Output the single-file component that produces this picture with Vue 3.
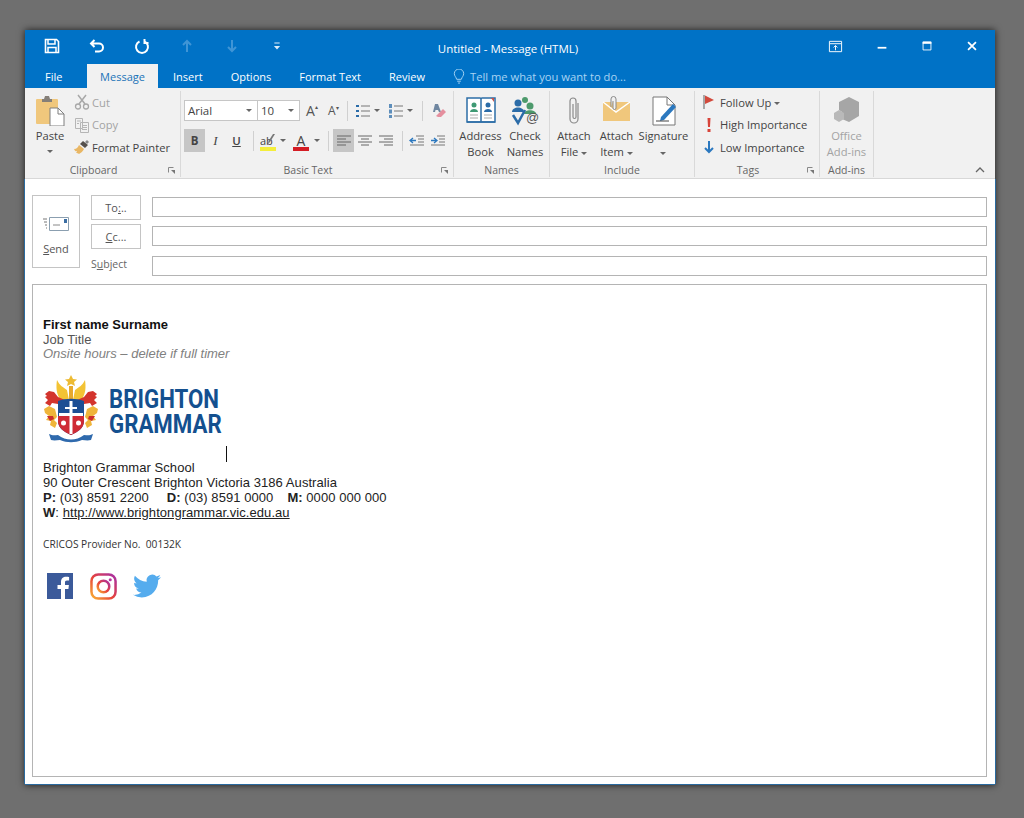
<script setup>
const tabs = ['Insert', 'Options', 'Format Text', 'Review']
</script>

<template>
  <div class="page">
    <div class="window">
      <header class="titlebar">
        <div class="qat">
          <svg class="qat-icon" viewBox="0 0 16 16"><path d="M1.5 1.500h11l2 2v11h-13z" fill="none" stroke="#fff" stroke-width="1.6"/><path d="M4 2v4h7V2M4 14V9.500h8V14" fill="none" stroke="#fff" stroke-width="1.5"/></svg>
          <svg class="qat-icon" viewBox="0 0 16 16"><path d="M2 5.500h8a4 4 0 0 1 0 8H6M5.500 2 2 5.500 5.500 9" fill="none" stroke="#fff" stroke-width="2"/></svg>
          <svg class="qat-icon" viewBox="0 0 16 16"><path d="M5.500 3.500a6 6 0 1 0 5 0M10.500 1v4h4" fill="none" stroke="#fff" stroke-width="2"/></svg>
          <svg class="qat-icon" viewBox="0 0 16 16"><path d="M8 14V3M4 7l4-4 4 4" fill="none" stroke="#3f95d6" stroke-width="2"/></svg>
          <svg class="qat-icon" viewBox="0 0 16 16"><path d="M8 2v11M4 9l4 4 4-4" fill="none" stroke="#3f95d6" stroke-width="2"/></svg>
          <svg class="qat-icon qat-more" viewBox="0 0 16 16"><path d="M5 4h6v1H5zM4.500 8h7L8 12z" fill="#dcecf8"/></svg>
        </div>
        <div class="doc-title">Untitled - Message (HTML)</div>
        <div class="win-controls">
          <svg class="win-icon win-first" viewBox="0 0 16 16"><path d="M1.500 2.500h13v11h-13zM2 5h12" fill="none" stroke="#fff"/><path d="M8 12V7M6 9l2-2 2 2" fill="none" stroke="#fff"/></svg>
          <svg class="win-icon" viewBox="0 0 16 16"><path d="M3 9h10v2H3z" fill="#fff"/></svg>
          <svg class="win-icon" viewBox="0 0 16 16"><path d="M3.500 3.500h9v9h-9z" fill="none" stroke="#fff"/><path d="M3 3h10v2.500H3z" fill="#fff"/></svg>
          <svg class="win-icon" viewBox="0 0 16 16"><path d="m3.500 3.500 9 9m0-9-9 9" fill="none" stroke="#fff" stroke-width="2"/></svg>
        </div>
      </header>

      <nav class="tabbar">
        <span class="tab tab-file">File</span>
        <span class="tab tab-active">Message</span>
        <span v-for="tab in tabs" :key="tab" class="tab">{{ tab }}</span>
        <span class="tell-me">
          <svg viewBox="0 0 12 16"><path d="M3.500 11C3 8.500 1 7.500 1 5a5 5 0 0 1 10 0c0 2.500-2 3.500-2.500 6zM4 13h4M5 15h2" fill="none" stroke="#a9d4f3"/></svg>
          Tell me what you want to do...
        </span>
      </nav>

      <section class="ribbon">
        <!-- Clipboard -->
        <div class="group group-clipboard">
          <div class="group-body clipboard">
            <div class="big-btn paste">
              <svg class="big-icon" viewBox="0 0 30 30">
                <rect x="1" y="3" width="22" height="25" rx="1" fill="#f0c77c"/>
                <path d="M7 3h2l1-3h4l1 3h2v3H7z" fill="#857f78"/>
                <path d="M15 12h8l6 6v12H15z" fill="#fff" stroke="#7f7f7f"/>
                <path d="M23 12v6h6" fill="none" stroke="#7f7f7f"/>
              </svg>
              <span class="big-label">Paste</span>
              <span class="caret caret-low"></span>
            </div>
            <div class="small-list">
              <div class="small-item disabled">
                <svg viewBox="0 0 16 16"><circle cx="4" cy="12.500" r="2.500" fill="none" stroke="#a8a8a8" stroke-width="1.300"/><circle cx="12" cy="12.500" r="2.500" fill="none" stroke="#a8a8a8" stroke-width="1.300"/><path d="M5 10 12 1M11 10 4 1" stroke="#a8a8a8" stroke-width="1.500"/></svg>
                <span>Cut</span>
              </div>
              <div class="small-item disabled">
                <svg viewBox="0 0 16 16"><path d="M1.500 1.500h7v10h-7zM6.500 5.500h8v10h-8zM3 4h4M3 6.500h2M8 8.500h5M8 10.500h5M8 12.500h5" fill="#f1f1f1" stroke="#b5b5b5"/></svg>
                <span>Copy</span>
              </div>
              <div class="small-item">
                <svg viewBox="0 0 16 16"><path d="M0 10c3 0 4-2 5-4l5 4c-1 2-3 4-5 5-1-1-2-1-3-1 1-1 1-2 1-2-1 .5-2 .5-3-2z" fill="#e9b765"/><path d="m6 5 3-3 5 4-3 3z" fill="#55504c"/><path d="m11 3 2-2 2 2-2 2z" fill="#888"/></svg>
                <span>Format Painter</span>
              </div>
            </div>
          </div>
          <div class="group-label has-launcher">Clipboard<svg class="launcher" viewBox="0 0 8 8"><path d="M.5.500h5M.5.500v5" stroke="#888" fill="none"/><path d="M3 3h4v4z" fill="#777"/></svg></div>
        </div>

        <!-- Basic Text -->
        <div class="group group-basic">
          <div class="group-body basic">
            <div class="tool-row row-font">
              <div class="combo combo-font"><span>Arial</span><i class="caret"></i></div>
              <div class="combo combo-size"><span>10</span><i class="caret"></i></div>
              <span class="grow-a">A<sup>▴</sup></span>
              <span class="shrink-a">A<sup>▾</sup></span>
              <i class="vsep sep-list"></i>
              <svg class="tool-svg" viewBox="0 0 16 16"><path d="M1 2h3v2H1zM1 7h3v2H1zM1 12h3v2H1z" fill="#2b6ca8"/><path d="M6 3h9M6 8h9M6 13h9" stroke="#777"/></svg>
              <i class="caret list-caret"></i>
              <svg class="tool-svg" viewBox="0 0 16 16"><path d="M1 1h3v4H1zM1 6.500h3v4H1zM1 12h3v3H1z" fill="#2b6ca8" opacity=".75"/><path d="M6 3h9M6 8h9M6 13h9" stroke="#777"/></svg>
              <i class="caret list-caret"></i>
              <i class="vsep sep-clear"></i>
              <svg class="tool-svg" viewBox="0 0 16 16"><path d="M4 1h3l3 8H8L7 7H4.500L4 9H2z" fill="#6f86a0"/><path d="m5 13 7-7 3 3-5 5H7z" fill="#e58f9e"/></svg>
            </div>
            <div class="tool-row row-format">
              <span class="fmt fmt-on fmt-b">B</span>
              <span class="fmt fmt-i">I</span>
              <span class="fmt fmt-u">U</span>
              <i class="vsep sep-color"></i>
              <span class="color-tool">
                <span class="color-letter">ab</span>
                <svg class="color-pen" viewBox="0 0 8 10"><path d="M7 0 2 8 0 10l.5-3L5 0z" fill="#777"/></svg>
                <i class="color-bar highlight"></i>
              </span>
              <i class="caret hl-caret"></i>
              <span class="color-tool font-color">
                <span class="color-a">A</span>
                <i class="color-bar red"></i>
              </span>
              <i class="caret"></i>
              <i class="vsep sep-align"></i>
              <span class="fmt fmt-on"><svg viewBox="0 0 16 16"><path d="M1 3h14M1 6h9M1 9h14M1 12h9" stroke="#666"/></svg></span>
              <span class="fmt"><svg viewBox="0 0 16 16"><path d="M1 3h14M4 6h8M1 9h14M4 12h8" stroke="#666"/></svg></span>
              <span class="fmt"><svg viewBox="0 0 16 16"><path d="M1 3h14M6 6h9M1 9h14M6 12h9" stroke="#666"/></svg></span>
              <i class="vsep sep-indent"></i>
              <span class="fmt"><svg viewBox="0 0 16 16"><path d="M7 3h8M9 6h6M9 9h6M1 12h14" stroke="#777"/><path d="M7 7.500H1M4 5 1 7.500 4 10" fill="none" stroke="#2b78bf" stroke-width="1.300"/></svg></span>
              <span class="fmt"><svg viewBox="0 0 16 16"><path d="M7 3h8M9 6h6M9 9h6M1 12h14" stroke="#777"/><path d="M1 7.500h6M4 5l3 2.500L4 10" fill="none" stroke="#2b78bf" stroke-width="1.300"/></svg></span>
            </div>
          </div>
          <div class="group-label has-launcher">Basic Text<svg class="launcher" viewBox="0 0 8 8"><path d="M.5.500h5M.5.500v5" stroke="#888" fill="none"/><path d="M3 3h4v4z" fill="#777"/></svg></div>
        </div>

        <!-- Names -->
        <div class="group group-names">
          <div class="group-body big-row">
            <div class="big-btn address">
              <svg class="big-icon" viewBox="0 0 30 30">
                <path d="M1 2h13c.5 0 1 .5 1 1 0-.5.500-1 1-1h13v24H1z" fill="#fff" stroke="#2c6ea6" stroke-width="1.500"/>
                <path d="M15 3v23M1 26h28" stroke="#2c6ea6" stroke-width="1.500"/>
                <circle cx="8" cy="9" r="2.500" fill="#3f9a74"/><path d="M4 16c0-4 8-4 8 0z" fill="#3f9a74"/>
                <circle cx="22" cy="9" r="2.500" fill="#2b6ca8"/><path d="M18 16c0-4 8-4 8 0z" fill="#2b6ca8"/>
                <path d="M4 19h8M4 22h8M18 19h8M18 22h8" stroke="#aaa"/>
                <path d="M25 2h3v4z" fill="#c6504a"/>
              </svg>
              <span class="big-label">Address<br>Book</span>
            </div>
            <div class="big-btn check">
              <svg class="big-icon" viewBox="0 0 30 30">
                <circle cx="8" cy="7" r="3.500" fill="#2b6ca8"/><path d="M2 16c0-6 12-6 12 0z" fill="#2b6ca8"/>
                <circle cx="15" cy="4" r="3" fill="#4d9a6c"/><circle cx="20" cy="10" r="3.500" fill="#4d9a6c"/><path d="M14 18c0-5 12-5 12 0z" fill="#4d9a6c"/>
                <path d="m3 19 5 8L15 14" fill="none" stroke="#2b6ca8" stroke-width="2.500"/>
                <text x="16" y="26" font-size="13" fill="#555" font-family="Liberation Sans, sans-serif">@</text>
              </svg>
              <span class="big-label">Check<br>Names</span>
            </div>
          </div>
          <div class="group-label">Names</div>
        </div>

        <!-- Include -->
        <div class="group group-include">
          <div class="group-body big-row">
            <div class="big-btn attach-file">
              <svg class="big-icon" viewBox="0 0 30 30"><path d="M19 7v16a4 4 0 0 1-8 0V5a3 3 0 0 1 6 0v16a1.500 1.500 0 0 1-3 0V8" fill="none" stroke="#8a8a8a" stroke-width="1.200"/></svg>
              <span class="big-label">Attach<br>File <i class="caret caret-inline"></i></span>
            </div>
            <div class="big-btn attach-item">
              <svg class="big-icon" viewBox="0 0 30 30"><path d="M1 6h27v19H1z" fill="#f0c77c"/><path d="m1 6 13 10L28 6" fill="none" stroke="#fff" stroke-width="1.500"/><path d="M9 11V3a2.500 2.500 0 0 1 5 0v9a1.500 1.500 0 0 1-3 0V5" fill="#f1f1f1" stroke="#8a8a8a"/></svg>
              <span class="big-label">Attach<br>Item <i class="caret caret-inline"></i></span>
            </div>
            <div class="big-btn signature">
              <svg class="big-icon" viewBox="0 0 30 30"><path d="M4 1h14l8 8v20H4z" fill="#fff" stroke="#777"/><path d="M18 1v8h8" fill="none" stroke="#777"/><path d="m12 21 12-13 3 3-12 13-4 1z" fill="#2b78bf"/><path d="M7 25h13" stroke="#444"/></svg>
              <span class="big-label">Signature<br><i class="caret caret-inline"></i></span>
            </div>
          </div>
          <div class="group-label">Include</div>
        </div>

        <!-- Tags -->
        <div class="group group-tags">
          <div class="group-body tag-list">
            <div class="tag-item">
              <svg viewBox="0 0 12 16"><path d="M1 1v14" stroke="#777" stroke-width="1.200"/><path d="M2 1.500 11 6 2 10z" fill="#d2493c"/></svg>
              <span>Follow Up <i class="caret caret-inline"></i></span>
            </div>
            <div class="tag-item">
              <svg viewBox="0 0 12 16"><path d="M4.500 1h3L7 10H5zM4.500 12h3v3h-3z" fill="#d8443a"/></svg>
              <span>High Importance</span>
            </div>
            <div class="tag-item">
              <svg viewBox="0 0 12 16"><path d="M6 2v11M2 9l4 4 4-4" fill="none" stroke="#2b78bf" stroke-width="2"/></svg>
              <span>Low Importance</span>
            </div>
          </div>
          <div class="group-label has-launcher">Tags<svg class="launcher" viewBox="0 0 8 8"><path d="M.5.500h5M.5.500v5" stroke="#888" fill="none"/><path d="M3 3h4v4z" fill="#777"/></svg></div>
        </div>

        <!-- Add-ins -->
        <div class="group group-addins">
          <div class="group-body big-row">
            <div class="big-btn addin disabled">
              <svg class="big-icon" viewBox="0 0 30 30"><path d="m17 1 10 5v14l-10 6-7-3v-7l-3-2V6z" fill="#a6a6a6"/><path d="m7 14 5 3v6l-5 3-5-3v-6z" fill="#b9b9b9"/></svg>
              <span class="big-label">Office<br>Add-ins</span>
            </div>
          </div>
          <div class="group-label">Add-ins</div>
        </div>

        <svg class="collapse" viewBox="0 0 10 6"><path d="m1 5 4-4 4 4" fill="none" stroke="#666" stroke-width="1.300"/></svg>
      </section>

      <section class="compose">
        <div class="headers">
          <button type="button" class="send">
            <svg viewBox="0 0 26 16"><path d="M0 3h4M1 6h3M2 9h2M3 12h1" stroke="#777"/><path d="M6.500 1.500h19v13h-19z" fill="#fff" stroke="#8b9fb0"/><path d="M10 9h7" stroke="#888"/><path d="M21 3h3v4h-3z" fill="#3b6ea3"/></svg>
            <span><u>S</u>end</span>
          </button>
          <div class="fields">
            <div class="field-row">
              <button type="button" class="addr-btn">To<u>:</u>..</button>
              <div class="input"></div>
            </div>
            <div class="field-row">
              <button type="button" class="addr-btn"><u>C</u>c...</button>
              <div class="input"></div>
            </div>
            <div class="field-row">
              <span class="subject">S<u>u</u>bject</span>
              <div class="input input-subject"></div>
            </div>
          </div>
        </div>

        <div class="body">
          <div class="sig-name">First name Surname</div>
          <div class="sig-job">Job Title</div>
          <div class="sig-hours">Onsite hours – delete if full timer</div>

          <div class="logo">
            <svg class="crest" viewBox="0 0 56 68">
              <path d="m28 0 2 4 4 .5-3 2.500 1 4-4-2-4 2 1-4-3-2.500 4-.5z" fill="#edbb33"/>
              <path d="M14 5c3 6 6 7 10 10l2 10H18C13 20 13 11 14 5zM42 5c-3 6-6 7-10 10l-2 10h8c5-5 5-14 4-20z" fill="#f3c334"/>
              <path d="M26 11h4v14h-4z" fill="#e7a92c"/>
              <path d="m2 19 4-3 5 1 4 5 7 3-7 4-6-1-2 3-5-3 3-3-3-3 2-1zM54 19l-4-3-5 1-4 5-7 3 7 4 6-1 2 3 5-3-3-3 3-3-2-1z" fill="#d3342d"/>
              <path d="m1 34 5-3 6 3 2 8-3 3 3 3-2 5-5-3 1-4-5-1 3-4-4-3zM55 34l-5-3-6 3-2 8 3 3-3 3 2 5 5-3-1-4 5-1-3-4 4-3z" fill="#efb53a"/>
              <path d="M4 41h6l1 3-4 2zM52 41h-6l-1 3 4 2z" fill="#cd2f2c"/>
              <path d="M15 26c8-3 18-3 26 0v20c0 7-6 11-13 14-7-3-13-7-13-14z" fill="#1d4f94"/>
              <path d="M15 41h26v5c0 7-6 11-13 14-7-3-13-7-13-14z" fill="#cf2b35"/>
              <path d="M26.500 26h3v33h-3zM16 38h24v3H16zM22 32h12v2H22z" fill="#fff"/>
              <circle cx="20.500" cy="48" r="2.500" fill="#fff"/><circle cx="35.500" cy="48" r="2.500" fill="#fff"/>
              <path d="M6 59c4 2 6 1 9 1 8 6 18 6 26 0 3 0 5 1 9-1l-2 6c-4 1-6 0-9 0-7 3-15 3-22 0-3 0-5 1-9 0z" fill="#2f6aad"/>
            </svg>
            <div class="wordmark"><div>BRIGHTON</div><div>GRAMMAR</div></div>
          </div>

          <i class="text-caret"></i>

          <div class="sig-lines">
            <div>Brighton Grammar School</div>
            <div>90 Outer Crescent Brighton Victoria 3186 Australia</div>
            <div class="phones">
              <span><b>P:</b> (03) 8591 2200</span>
              <span><b>D:</b> (03) 8591 0000</span>
              <span><b>M:</b> 0000 000 000</span>
            </div>
            <div><b>W</b>: <a href="#">http://www.brightongrammar.vic.edu.au</a></div>
          </div>

          <div class="cricos">CRICOS Provider No.&nbsp; 00132K</div>

          <div class="social">
            <svg class="fb" viewBox="0 0 26 26"><rect width="26" height="26" fill="#3b5a9a"/><path d="M18 26V16h3.400l.5-4H18V9.500c0-1.200.4-2 2-2h2.100V4c-.4 0-1.600-.2-3-.2-3 0-5.100 1.900-5.100 5.200v3h-3.500v4H14v10z" fill="#fff"/></svg>
            <svg class="ig" viewBox="0 0 28 28">
              <defs>
                <linearGradient id="ig-grad" x1="0" y1="1" x2="1" y2="0">
                  <stop offset="0" stop-color="#f9b233"/>
                  <stop offset=".45" stop-color="#e8443a"/>
                  <stop offset="1" stop-color="#a62fa8"/>
                </linearGradient>
              </defs>
              <rect x="1.500" y="1.500" width="25" height="25" rx="7" fill="none" stroke="url(#ig-grad)" stroke-width="2.600"/>
              <circle cx="14" cy="14" r="6" fill="none" stroke="url(#ig-grad)" stroke-width="2.600"/>
              <circle cx="21" cy="7" r="1.600" fill="#b936a0"/>
            </svg>
            <svg class="tw" viewBox="0 0 24 24"><path d="M23.953 4.570a10 10 0 0 1-2.825.775 4.958 4.958 0 0 0 2.163-2.723c-.951.555-2.005.959-3.127 1.184a4.920 4.920 0 0 0-8.384 4.482C7.690 8.095 4.067 6.130 1.640 3.162a4.822 4.822 0 0 0-.666 2.475c0 1.710.870 3.213 2.188 4.096a4.904 4.904 0 0 1-2.228-.616v.060a4.923 4.923 0 0 0 3.946 4.827 4.996 4.996 0 0 1-2.212.085 4.936 4.936 0 0 0 4.604 3.417 9.867 9.867 0 0 1-6.102 2.105c-.390 0-.779-.023-1.170-.067a13.995 13.995 0 0 0 7.557 2.209c9.053 0 13.998-7.496 13.998-13.985 0-.210 0-.420-.015-.630A9.935 9.935 0 0 0 24 4.590z" fill="#55acee"/></svg>
          </div>
        </div>
      </section>
    </div>
  </div>
</template>

<style>
html, body {
  margin: 0;
  background: #6f6f6f;
}
</style>

<style scoped>
.page {
  box-sizing: border-box;
  width: 1024px;
  height: 818px;
  padding: 30px 29px 33px 25px;
  background: #6f6f6f;
  font-family: "Open Sans", "Noto Sans", sans-serif;
  overflow: hidden;
}

.window {
  height: 100%;
  display: flex;
  flex-direction: column;
  background: #fff;
  box-shadow: 0 0 7px rgba(0, 0, 0, 0.75);
  border-bottom: 1px solid #2a6a9f;
  box-sizing: border-box;
}

.titlebar {
  height: 34px;
  flex: none;
  display: flex;
  align-items: center;
  box-sizing: border-box;
  padding-bottom: 2px;
  background: #0072c6;
  color: #fff;
}

.qat {
  width: 327px;
  display: flex;
  align-items: center;
  gap: 29px;
  padding-left: 19px;
  box-sizing: border-box;
}

.qat-icon {
  width: 16px;
  height: 16px;
  flex: none;
}

.qat-more {
  width: 14px;
  height: 14px;
  margin-left: 1px;
}

.doc-title {
  width: 307px;
  padding: 5px 0 0 5px;
  box-sizing: border-box;
  text-align: center;
  font-size: 11.5px;
}

.win-controls {
  margin-left: auto;
  display: flex;
  align-items: center;
  gap: 31px;
  padding-right: 16px;
}

.win-icon {
  width: 14px;
  height: 14px;
}

.win-first {
  width: 15px;
  height: 15px;
  margin-right: 1px;
}

.tabbar {
  height: 24px;
  flex: none;
  display: flex;
  align-items: stretch;
  background: #0072c6;
  color: #fff;
  font-size: 11px;
}

.tab {
  display: flex;
  align-items: center;
  padding: 0 14px;
}

.tab-file {
  width: 62px;
  box-sizing: border-box;
  padding-left: 20px;
}

.tab-active {
  width: 71px;
  box-sizing: border-box;
  justify-content: center;
  padding: 0;
  background: #f1f1f1;
  color: #1a73b8;
}

.tab-active + .tab {
  padding-left: 15px;
}

.tell-me {
  display: flex;
  align-items: center;
  gap: 5px;
  margin-left: 14px;
  font-size: 11.2px;
  color: #a9d4f3;
}

.tell-me svg {
  width: 12px;
  height: 15px;
}

.ribbon {
  height: 91px;
  flex: none;
  display: flex;
  position: relative;
  background: #f1f1f1;
  border-bottom: 1px solid #d8d8d8;
  box-sizing: border-box;
  color: #444;
  font-size: 11.2px;
}

.group {
  flex: none;
  display: flex;
  flex-direction: column;
  border-right: 1px solid #d9d9d9;
  margin: 3px 0 1px;
  box-sizing: border-box;
  position: relative;
}

.group-clipboard { width: 156px; }
.group-basic { width: 273px; }
.group-names { width: 96px; }
.group-include { width: 145px; }
.group-tags { width: 125px; }
.group-addins { width: 54px; }

.group-body {
  flex: 1;
  min-height: 0;
}

.group-label {
  height: 14px;
  display: flex;
  align-items: center;
  justify-content: center;
  color: #666;
  font-size: 10.5px;
}

.has-launcher {
  padding-right: 18px;
}

.launcher {
  position: absolute;
  right: 4px;
  bottom: 2px;
  width: 8px;
  height: 8px;
}

.clipboard {
  display: flex;
}

.big-btn {
  display: flex;
  flex-direction: column;
  align-items: center;
  flex: none;
}

.big-icon {
  width: 30px;
  height: 30px;
  flex: none;
}

.big-label {
  margin-top: 2px;
  text-align: center;
  line-height: 16px;
}

.paste {
  width: 48px;
  padding-top: 5px;
  margin-left: 1px;
}

.caret {
  display: inline-block;
  width: 0;
  height: 0;
  border-left: 3px solid transparent;
  border-right: 3px solid transparent;
  border-top: 3px solid #666;
  flex: none;
}

.caret-low {
  margin-top: 6px;
}

.caret-inline {
  vertical-align: middle;
}

.small-list {
  display: flex;
  flex-direction: column;
}

.small-item {
  display: flex;
  align-items: center;
  gap: 2px;
  height: 22.500px;
}

.small-item svg {
  width: 16px;
  height: 16px;
}

.disabled {
  color: #a3a3a3;
}

.basic {
  padding: 9px 0 0 3px;
  display: flex;
  flex-direction: column;
  gap: 8px;
}

.tool-row {
  display: flex;
  align-items: center;
}

.row-font {
  height: 21px;
}

.row-format {
  height: 23px;
}

.combo {
  height: 21px;
  box-sizing: border-box;
  display: flex;
  align-items: center;
  justify-content: space-between;
  padding: 0 5px 0 3px;
  background: #fff;
  border: 1px solid #c6c6c6;
  font-size: 11.5px;
}

.combo-font { width: 74px; }
.combo-size {
  width: 43px;
  margin-left: -1px;
}

.grow-a, .shrink-a {
  display: inline-flex;
  color: #555;
  line-height: 1;
}

.grow-a {
  width: 17px;
  margin-left: 6px;
  font-size: 14px;
}

.shrink-a {
  width: 15px;
  margin-left: 5px;
  font-size: 12px;
}

.grow-a sup, .shrink-a sup {
  font-size: 6px;
  line-height: 1;
}

.vsep {
  width: 1px;
  height: 20px;
  background: #d0d0d0;
  flex: none;
}

.sep-list { margin: 0 7px 0 4px; }
.sep-clear { margin: 0 8px 0 1px; }
.sep-color { margin: 0 6px; }
.sep-align { margin: 0 4px 0 8px; }
.sep-indent { margin: 0 3px 0 6px; }

.tool-svg {
  width: 16px;
  height: 16px;
  flex: none;
}

.list-caret {
  margin: 0 8px 0 3px;
}

.hl-caret {
  margin-right: 7px;
}

.fmt {
  width: 21px;
  height: 23px;
  display: flex;
  align-items: center;
  justify-content: center;
  flex: none;
  font-family: "Liberation Serif", serif;
  font-size: 13px;
  color: #444;
}

.fmt svg {
  width: 16px;
  height: 16px;
}

.fmt-on {
  background: #c6c6c6;
}

.fmt-b {
  font-family: "Open Sans", sans-serif;
  font-weight: 700;
  font-size: 11.5px;
}

.fmt-i {
  font-style: italic;
}

.fmt-u {
  text-decoration: underline;
  font-family: "Open Sans", sans-serif;
  font-weight: 600;
  font-size: 11.5px;
}

.color-tool {
  width: 16px;
  height: 20px;
  display: flex;
  flex-direction: column;
  align-items: center;
  justify-content: flex-end;
  flex: none;
  margin-right: 4px;
  position: relative;
}

.font-color {
  margin-right: 5px;
}

.color-letter, .color-a {
  font-size: 11px;
  line-height: 13px;
  color: #444;
}

.color-letter {
  align-self: flex-start;
}

.color-pen {
  position: absolute;
  right: 0;
  top: 3px;
  width: 8px;
  height: 10px;
}

.color-a {
  font-size: 14px;
}

.color-bar {
  width: 16px;
  height: 4px;
  flex: none;
}

.highlight { background: #f4ee3b; }
.red { background: #d41d24; }

.big-row {
  display: flex;
  padding-top: 5px;
}

.address {
  width: 45px;
  margin-left: 4px;
}

.check {
  width: 44px;
}

.attach-file {
  width: 46px;
  margin-left: 1px;
}

.attach-item {
  width: 39px;
}

.signature {
  width: 55px;
}

.addin {
  width: 53px;
}

.tag-list {
  display: flex;
  flex-direction: column;
  padding-left: 8px;
}

.tag-item {
  display: flex;
  align-items: center;
  gap: 5px;
  height: 22.500px;
}

.tag-item svg {
  width: 12px;
  height: 16px;
}

.collapse {
  position: absolute;
  right: 10px;
  bottom: 5px;
  width: 10px;
  height: 6px;
}

.compose {
  flex: 1;
  min-height: 0;
  display: flex;
  flex-direction: column;
  padding: 16px 8px 7px 7px;
  gap: 6px;
  background: #fff;
  border-left: 1px solid #2a6a9f;
  border-right: 1px solid #2a6a9f;
  margin-left: -1px;
  margin-right: -1px;
}

.headers {
  display: flex;
  align-items: flex-start;
  gap: 11px;
  flex: none;
}

.send {
  width: 48px;
  height: 73px;
  display: flex;
  flex-direction: column;
  align-items: center;
  gap: 9px;
  padding: 20px 0 0;
  background: #fff;
  border: 1px solid #c4c4c4;
  box-sizing: border-box;
  color: #555;
  font-family: inherit;
  font-size: 11px;
}

.send svg {
  width: 26px;
  height: 16px;
}

.fields {
  flex: 1;
  display: flex;
  flex-direction: column;
  gap: 4px;
}

.field-row {
  height: 25px;
  display: flex;
  align-items: flex-start;
  gap: 11px;
}

.addr-btn {
  width: 50px;
  height: 25px;
  padding: 0;
  background: #fff;
  border: 1px solid #c4c4c4;
  color: #555;
  font-family: inherit;
  font-size: 11px;
}

.subject {
  width: 50px;
  line-height: 22px;
  color: #666;
  font-size: 10.500px;
}

.input {
  flex: 1;
  height: 20px;
  margin-top: 2px;
  background: #fff;
  border: 1px solid #b4b4b4;
  box-sizing: border-box;
}

.input-subject {
  margin-top: 3px;
}

.body {
  flex: 1;
  min-height: 0;
  padding: 33px 10px 0;
  border: 1px solid #b4b4b4;
  font-family: "Liberation Sans", Arial, sans-serif;
  font-size: 13px;
  line-height: 14.500px;
  color: #222;
  position: relative;
}

.sig-name {
  font-weight: 700;
  color: #111;
}

.sig-job {
  color: #555;
}

.sig-hours {
  color: #808080;
  font-style: italic;
}

.logo {
  display: flex;
  align-items: center;
  gap: 10px;
  margin-top: 13px;
  height: 68px;
}

.crest {
  width: 56px;
  height: 68px;
  flex: none;
}

.wordmark {
  display: flex;
  flex-direction: column;
  padding-top: 6px;
  font-family: "Roboto", sans-serif;
  font-weight: 700;
  font-size: 25px;
  line-height: 25px;
  color: #14508f;
  transform: scaleX(0.89);
  transform-origin: left center;
}

.text-caret {
  position: absolute;
  left: 193px;
  top: 161px;
  width: 1px;
  height: 16px;
  background: #111;
}

.sig-lines {
  margin-top: 17px;
  letter-spacing: 0.06px;
  line-height: 15px;
}

.phones {
  display: flex;
}

.phones span:nth-child(1) { margin-right: 18px; }
.phones span:nth-child(2) { margin-right: 14px; }

.sig-lines a {
  color: #222;
  text-decoration: underline;
}

.cricos {
  margin-top: 17px;
  font-family: "Open Sans", sans-serif;
  font-size: 10.200px;
  color: #333;
}

.social {
  display: flex;
  align-items: center;
  margin: 21px 0 0 4px;
}

.fb {
  width: 26px;
  height: 26px;
}

.ig {
  width: 27px;
  height: 27px;
  margin-left: 17px;
}

.tw {
  width: 28px;
  height: 28px;
  margin-left: 16px;
}
</style>
